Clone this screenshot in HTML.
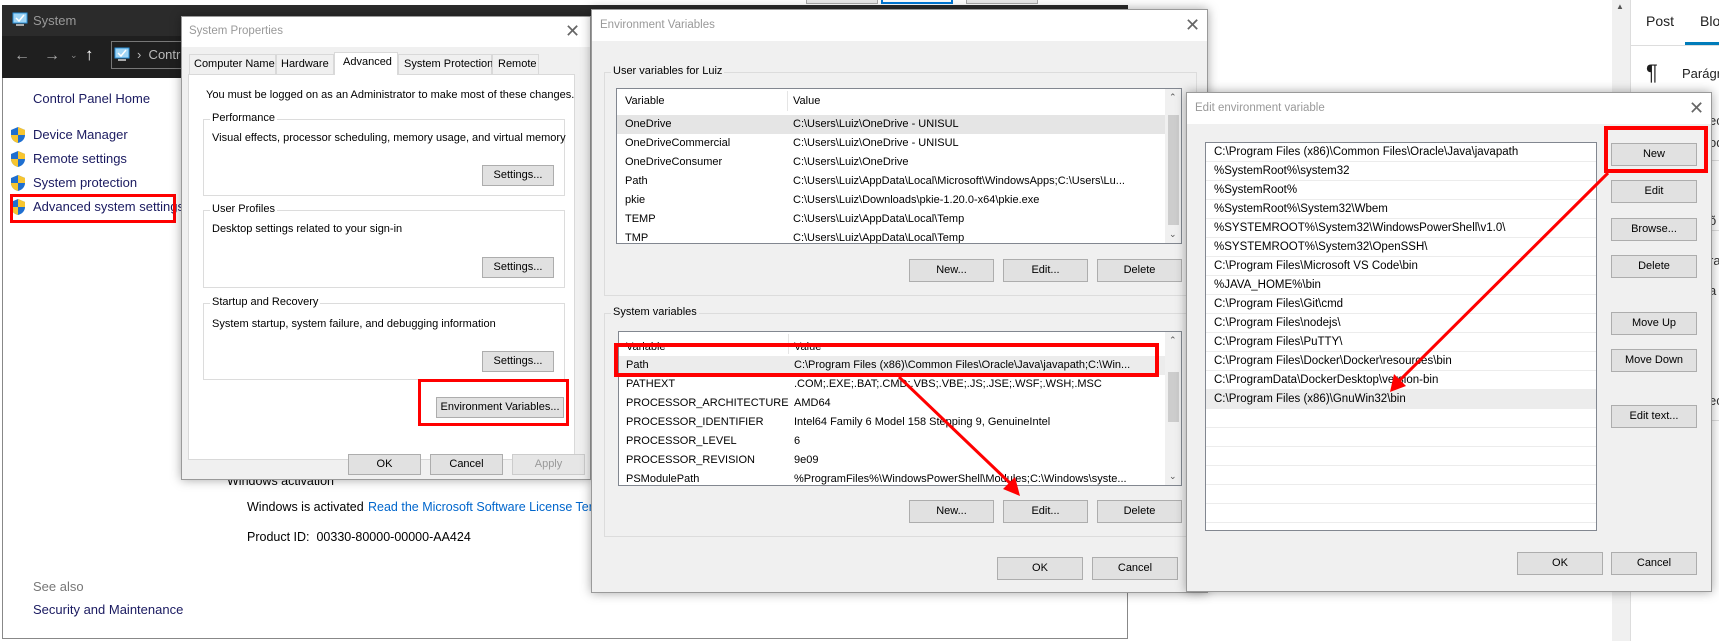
<!DOCTYPE html>
<html><head><meta charset="utf-8">
<style>
*{margin:0;padding:0;box-sizing:border-box}
body{width:1719px;height:641px;overflow:hidden;background:#fff;font-family:"Liberation Sans",sans-serif;font-size:12px;color:#000;position:relative}
.a{position:absolute;white-space:nowrap}
.btn{position:absolute;background:#e1e1e1;border:1px solid #adadad;text-align:center;font-size:11px;white-space:nowrap}
.dlg{position:absolute;background:#f0f0f0;border:1px solid #9a9a9a;box-shadow:0 0 10px rgba(0,0,0,.35);font-size:11px}
.tb{position:absolute;left:0;top:0;right:0;background:#fff}
.ttl{position:absolute;color:#999;font-size:11.5px}
.x{position:absolute;font-size:18px;color:#666;font-weight:300}
.grp{position:absolute;border:1px solid #dcdcdc}
.gl{position:absolute;background:#f0f0f0;padding:0 2px;top:-8px;left:6px;font-size:11px}
.lv{position:absolute;background:#fff;border:1px solid #828790;overflow:hidden}
.row{position:absolute;left:0;height:19px;line-height:19px;white-space:nowrap;width:100%}
.red{position:absolute;border:4px solid #f00}
.lnk{color:#1a1a60;font-size:13px}
</style></head><body>

<!-- top strip -->
<div class="a" style="left:806px;top:0;width:72px;height:4px;border:1px solid #aaa;border-top:0;background:#e8e8e8"></div>
<div class="a" style="left:881px;top:0;width:72px;height:4px;border:2px solid #0078d7;border-top:0"></div>
<div class="a" style="left:966px;top:0;width:72px;height:4px;border:1px solid #aaa;border-top:0;background:#e8e8e8"></div>

<!-- System window -->
<div class="a" style="left:2px;top:5px;width:1126px;height:634px;border:1px solid #888;background:#fff"></div>
<div class="a" style="left:2px;top:5px;width:1126px;height:31px;background:#2b2b2b"></div>
<div class="a" style="left:2px;top:36px;width:1126px;height:42px;background:#1f1f1f"></div>
<svg class="a" style="left:12px;top:12px" width="16" height="15"><rect x="1" y="1" width="14" height="10" fill="#9fd4f5" stroke="#2a8fd8"/><path d="M4 6l3 3 5-6" stroke="#fff" stroke-width="1.5" fill="none"/><rect x="4" y="12" width="8" height="2" fill="#aaa"/></svg>
<div class="a" style="left:33px;top:13px;color:#999;font-size:13px">System</div>
<div class="a" style="left:14px;top:47px;color:#aaa;font-size:16px">&#8592;</div>
<div class="a" style="left:44px;top:47px;color:#aaa;font-size:16px">&#8594;</div>
<div class="a" style="left:70px;top:50px;color:#888;font-size:9px">&#8964;</div>
<div class="a" style="left:85px;top:45px;color:#fff;font-size:17px;font-weight:bold">&#8593;</div>
<div class="a" style="left:111px;top:41px;width:80px;height:28px;border:1px solid #777"></div>
<svg class="a" style="left:114px;top:47px" width="16" height="15"><rect x="1" y="1" width="14" height="10" fill="#9fd4f5" stroke="#2a8fd8"/><path d="M4 6l3 3 5-6" stroke="#fff" stroke-width="1.5" fill="none"/><rect x="4" y="12" width="8" height="2" fill="#aaa"/></svg>
<div class="a" style="left:137px;top:47px;color:#bbb;font-size:13px">› &nbsp;Contr</div>

<div class="a lnk" style="left:33px;top:91px">Control Panel Home</div>
<svg width="0" height="0" style="position:absolute"><defs><symbol id="sh" viewBox="0 0 14 16"><path d="M7 0L0 3v5c0 4 3 7 7 8 4-1 7-4 7-8V3z" fill="#1f6fd0"/><path d="M7 0l7 3v5H7z" fill="#f7c530"/><path d="M0 8h7v8C3 15 0 12 0 8z" fill="#f7c530"/></symbol></defs></svg>
<svg class="a" style="left:11px;top:127px" width="14" height="16"><use href="#sh"/></svg>
<div class="a lnk" style="left:33px;top:127px">Device Manager</div>
<svg class="a" style="left:11px;top:151px" width="14" height="16"><use href="#sh"/></svg>
<div class="a lnk" style="left:33px;top:151px">Remote settings</div>
<svg class="a" style="left:11px;top:175px" width="14" height="16"><use href="#sh"/></svg>
<div class="a lnk" style="left:33px;top:175px">System protection</div>
<svg class="a" style="left:11px;top:199px" width="14" height="16"><use href="#sh"/></svg>
<div class="a lnk" style="left:33px;top:199px">Advanced system settings</div>
<div class="red" style="left:10px;top:194px;width:166px;height:29px;border-width:3px"></div>

<div class="a" style="left:227px;top:474px;font-size:12.5px">Windows activation</div>
<div class="a" style="left:247px;top:500px;font-size:12.5px">Windows is activated</div>
<div class="a" style="left:368px;top:500px;font-size:12.5px;color:#0066cc">Read the Microsoft Software License Terms</div>
<div class="a" style="left:247px;top:530px;font-size:12.5px">Product ID: &nbsp;00330-80000-00000-AA424</div>
<div class="a" style="left:33px;top:579px;font-size:13px;color:#777">See also</div>
<div class="a lnk" style="left:33px;top:602px">Security and Maintenance</div>

<!-- right panel -->
<div class="a" style="left:1612px;top:0;width:18px;height:641px;background:#f0f0f0"></div>
<div class="a" style="left:1616px;top:2px;font-size:8px;color:#555">&#9650;</div>
<div class="a" style="left:1630px;top:0;width:89px;height:641px;border-left:1px solid #ddd;background:#fff"></div>
<div class="a" style="left:1646px;top:13px;font-size:14px;color:#1e1e1e">Post</div>
<div class="a" style="left:1700px;top:13px;font-size:14px;color:#1e1e1e">Blo</div>
<div class="a" style="left:1631px;top:45px;width:88px;height:1px;background:#ddd"></div>
<div class="a" style="left:1685px;top:42px;width:34px;height:3px;background:#007cba"></div>
<div class="a" style="left:1646px;top:60px;font-size:22px;color:#1e1e1e">&para;</div>
<div class="a" style="left:1682px;top:66px;font-size:13px;color:#1e1e1e">Parágr</div>
<div class="a" style="left:1709px;top:113px;font-size:13px;color:#333">ec</div>
<div class="a" style="left:1709px;top:135px;font-size:13px;color:#333">od</div>
<div class="a" style="left:1709px;top:213px;font-size:13px;color:#333">õ</div>
<div class="a" style="left:1709px;top:253px;font-size:13px;color:#333">ra</div>
<div class="a" style="left:1709px;top:283px;font-size:13px;color:#333">a</div>
<div class="a" style="left:1709px;top:393px;font-size:13px;color:#333">ec</div>
<div class="a" style="left:1631px;top:160px;width:88px;height:1px;background:#ddd"></div>
<div class="a" style="left:1631px;top:230px;width:88px;height:1px;background:#ddd"></div>
<div class="a" style="left:1631px;top:420px;width:88px;height:1px;background:#ddd"></div>

<!-- System Properties -->
<div class="dlg" style="left:181px;top:16px;width:410px;height:464px">
  <div class="tb" style="height:30px"></div>
  <div class="ttl" style="left:7px;top:8px">System Properties</div>
  <div class="x" style="left:383px;top:4px">&#10005;</div>
  <div class="a" style="left:6px;top:57px;width:387px;height:386px;background:#fff;border:1px solid #d9d9d9"></div>
  <div class="a" style="left:7px;top:37px;width:87px;height:21px;border:1px solid #d9d9d9;background:#f0f0f0;line-height:19px;padding-left:4px">Computer Name</div>
  <div class="a" style="left:94px;top:37px;width:58px;height:21px;border:1px solid #d9d9d9;background:#f0f0f0;line-height:19px;padding-left:4px">Hardware</div>
  <div class="a" style="left:152px;top:35px;width:64px;height:23px;border:1px solid #d9d9d9;border-bottom:0;background:#fff;line-height:19px;padding-left:8px">Advanced</div>
  <div class="a" style="left:216px;top:37px;width:94px;height:21px;border:1px solid #d9d9d9;background:#f0f0f0;line-height:19px;padding-left:5px">System Protection</div>
  <div class="a" style="left:310px;top:37px;width:47px;height:21px;border:1px solid #d9d9d9;background:#f0f0f0;line-height:19px;padding-left:5px">Remote</div>
  <div class="a" style="left:24px;top:72px">You must be logged on as an Administrator to make most of these changes.</div>
  <div class="grp" style="left:21px;top:102px;width:362px;height:77px"><div class="gl" style="background:#fff">Performance</div></div>
  <div class="a" style="left:30px;top:115px">Visual effects, processor scheduling, memory usage, and virtual memory</div>
  <div class="btn" style="left:300px;top:148px;width:72px;height:21px;line-height:19px">Settings...</div>
  <div class="grp" style="left:21px;top:193px;width:362px;height:78px"><div class="gl" style="background:#fff">User Profiles</div></div>
  <div class="a" style="left:30px;top:206px">Desktop settings related to your sign-in</div>
  <div class="btn" style="left:300px;top:240px;width:72px;height:21px;line-height:19px">Settings...</div>
  <div class="grp" style="left:21px;top:286px;width:362px;height:77px"><div class="gl" style="background:#fff">Startup and Recovery</div></div>
  <div class="a" style="left:30px;top:301px">System startup, system failure, and debugging information</div>
  <div class="btn" style="left:300px;top:334px;width:72px;height:21px;line-height:19px">Settings...</div>
  <div class="btn" style="left:254px;top:380px;width:128px;height:21px;line-height:19px">Environment Variables...</div>
  <div class="btn" style="left:166px;top:437px;width:73px;height:21px;line-height:19px">OK</div>
  <div class="btn" style="left:248px;top:437px;width:73px;height:21px;line-height:19px">Cancel</div>
  <div class="btn" style="left:330px;top:437px;width:73px;height:21px;line-height:19px;color:#999;border-color:#ccc;background:#e6e6e6">Apply</div>
</div>
<div class="red" style="left:418px;top:379px;width:151px;height:47px;border-width:3px"></div>

<!-- Environment Variables -->
<div class="dlg" style="left:591px;top:9px;width:617px;height:584px">
  <div class="tb" style="height:31px"></div>
  <div class="ttl" style="left:8px;top:9px">Environment Variables</div>
  <div class="x" style="left:593px;top:5px">&#10005;</div>
  <div class="grp" style="left:12px;top:62px;width:593px;height:224px"><div class="gl">User variables for Luiz</div></div>
  <div class="lv" style="left:24px;top:78px;width:566px;height:156px">
    <div class="row" style="top:0;height:22px;line-height:24px;padding-left:8px">Variable</div>
    <div class="a" style="left:170px;top:2px;width:1px;height:20px;background:#e5e5e5"></div>
    <div class="a" style="left:176px;top:0;line-height:24px">Value</div>
    <div class="row" style="top:26px;background:#e5e5e5;width:548px"></div>
    <div class="row" style="top:26px;padding-left:8px">OneDrive</div><div class="a" style="left:176px;top:26px;line-height:19px">C:\Users\Luiz\OneDrive - UNISUL</div>
    <div class="row" style="top:45px;padding-left:8px">OneDriveCommercial</div><div class="a" style="left:176px;top:45px;line-height:19px">C:\Users\Luiz\OneDrive - UNISUL</div>
    <div class="row" style="top:64px;padding-left:8px">OneDriveConsumer</div><div class="a" style="left:176px;top:64px;line-height:19px">C:\Users\Luiz\OneDrive</div>
    <div class="row" style="top:83px;padding-left:8px">Path</div><div class="a" style="left:176px;top:83px;line-height:19px">C:\Users\Luiz\AppData\Local\Microsoft\WindowsApps;C:\Users\Lu...</div>
    <div class="row" style="top:102px;padding-left:8px">pkie</div><div class="a" style="left:176px;top:102px;line-height:19px">C:\Users\Luiz\Downloads\pkie-1.20.0-x64\pkie.exe</div>
    <div class="row" style="top:121px;padding-left:8px">TEMP</div><div class="a" style="left:176px;top:121px;line-height:19px">C:\Users\Luiz\AppData\Local\Temp</div>
    <div class="row" style="top:140px;padding-left:8px">TMP</div><div class="a" style="left:176px;top:140px;line-height:19px">C:\Users\Luiz\AppData\Local\Temp</div>
    <div class="a" style="left:548px;top:0;width:17px;height:156px;background:#f0f0f0"></div>
    <div class="a" style="left:551px;top:26px;width:11px;height:110px;background:#cdcdcd"></div>
    <div class="a" style="left:552px;top:3px;font-size:9px;color:#555">&#8963;</div>
    <div class="a" style="left:552px;top:140px;font-size:9px;color:#555">&#8964;</div>
  </div>
  <div class="btn" style="left:317px;top:249px;width:85px;height:23px;line-height:21px">New...</div>
  <div class="btn" style="left:411px;top:249px;width:85px;height:23px;line-height:21px">Edit...</div>
  <div class="btn" style="left:505px;top:249px;width:85px;height:23px;line-height:21px">Delete</div>

  <div class="grp" style="left:12px;top:303px;width:593px;height:224px"><div class="gl">System variables</div></div>
  <div class="lv" style="left:26px;top:321px;width:564px;height:155px">
    <div class="a" style="left:7px;top:3px;line-height:24px">Variable</div>
    <div class="a" style="left:169px;top:2px;width:1px;height:20px;background:#e5e5e5"></div>
    <div class="a" style="left:175px;top:3px;line-height:24px">Value</div>
    <div class="row" style="top:24px;background:#ececec;width:546px"></div>
    <div class="a" style="left:7px;top:24px;line-height:19px">Path</div><div class="a" style="left:175px;top:24px;line-height:19px">C:\Program Files (x86)\Common Files\Oracle\Java\javapath;C:\Win...</div>
    <div class="a" style="left:7px;top:43px;line-height:19px">PATHEXT</div><div class="a" style="left:175px;top:43px;line-height:19px">.COM;.EXE;.BAT;.CMD;.VBS;.VBE;.JS;.JSE;.WSF;.WSH;.MSC</div>
    <div class="a" style="left:7px;top:62px;line-height:19px">PROCESSOR_ARCHITECTURE</div><div class="a" style="left:175px;top:62px;line-height:19px">AMD64</div>
    <div class="a" style="left:7px;top:81px;line-height:19px">PROCESSOR_IDENTIFIER</div><div class="a" style="left:175px;top:81px;line-height:19px">Intel64 Family 6 Model 158 Stepping 9, GenuineIntel</div>
    <div class="a" style="left:7px;top:100px;line-height:19px">PROCESSOR_LEVEL</div><div class="a" style="left:175px;top:100px;line-height:19px">6</div>
    <div class="a" style="left:7px;top:119px;line-height:19px">PROCESSOR_REVISION</div><div class="a" style="left:175px;top:119px;line-height:19px">9e09</div>
    <div class="a" style="left:7px;top:138px;line-height:19px">PSModulePath</div><div class="a" style="left:175px;top:138px;line-height:19px">%ProgramFiles%\WindowsPowerShell\Modules;C:\Windows\syste...</div>
    <div class="a" style="left:546px;top:0;width:17px;height:155px;background:#f0f0f0"></div>
    <div class="a" style="left:549px;top:40px;width:11px;height:50px;background:#cdcdcd"></div>
    <div class="a" style="left:550px;top:3px;font-size:9px;color:#555">&#8963;</div>
    <div class="a" style="left:550px;top:139px;font-size:9px;color:#555">&#8964;</div>
  </div>
  <div class="btn" style="left:317px;top:490px;width:85px;height:23px;line-height:21px">New...</div>
  <div class="btn" style="left:411px;top:490px;width:85px;height:23px;line-height:21px">Edit...</div>
  <div class="btn" style="left:505px;top:490px;width:85px;height:23px;line-height:21px">Delete</div>
  <div class="btn" style="left:405px;top:547px;width:86px;height:23px;line-height:21px">OK</div>
  <div class="btn" style="left:500px;top:547px;width:86px;height:23px;line-height:21px">Cancel</div>
</div>
<div class="red" style="left:614px;top:343px;width:545px;height:34px"></div>

<!-- Edit environment variable -->
<div class="dlg" style="left:1186px;top:92px;width:526px;height:500px">
  <div class="tb" style="height:31px"></div>
  <div class="ttl" style="left:8px;top:9px">Edit environment variable</div>
  <div class="x" style="left:502px;top:5px">&#10005;</div>
  <div class="lv" style="left:18px;top:49px;width:392px;height:389px;font-size:11.5px">
    <div class="a" style="left:0;top:0;width:100%;height:100%;background:repeating-linear-gradient(to bottom,transparent 0,transparent 18px,#ececec 18px,#ececec 19px)"></div>
    <div class="row" style="top:247px;background:#ececec"></div>
    <div class="a" style="left:8px;top:0;line-height:19px">C:\Program Files (x86)\Common Files\Oracle\Java\javapath</div>
    <div class="a" style="left:8px;top:19px;line-height:19px">%SystemRoot%\system32</div>
    <div class="a" style="left:8px;top:38px;line-height:19px">%SystemRoot%</div>
    <div class="a" style="left:8px;top:57px;line-height:19px">%SystemRoot%\System32\Wbem</div>
    <div class="a" style="left:8px;top:76px;line-height:19px">%SYSTEMROOT%\System32\WindowsPowerShell\v1.0\</div>
    <div class="a" style="left:8px;top:95px;line-height:19px">%SYSTEMROOT%\System32\OpenSSH\</div>
    <div class="a" style="left:8px;top:114px;line-height:19px">C:\Program Files\Microsoft VS Code\bin</div>
    <div class="a" style="left:8px;top:133px;line-height:19px">%JAVA_HOME%\bin</div>
    <div class="a" style="left:8px;top:152px;line-height:19px">C:\Program Files\Git\cmd</div>
    <div class="a" style="left:8px;top:171px;line-height:19px">C:\Program Files\nodejs\</div>
    <div class="a" style="left:8px;top:190px;line-height:19px">C:\Program Files\PuTTY\</div>
    <div class="a" style="left:8px;top:209px;line-height:19px">C:\Program Files\Docker\Docker\resources\bin</div>
    <div class="a" style="left:8px;top:228px;line-height:19px">C:\ProgramData\DockerDesktop\version-bin</div>
    <div class="a" style="left:8px;top:247px;line-height:19px">C:\Program Files (x86)\GnuWin32\bin</div>
  </div>
  <div class="btn" style="left:424px;top:50px;width:86px;height:23px;line-height:21px">New</div>
  <div class="btn" style="left:424px;top:87px;width:86px;height:23px;line-height:21px">Edit</div>
  <div class="btn" style="left:424px;top:125px;width:86px;height:23px;line-height:21px">Browse...</div>
  <div class="btn" style="left:424px;top:162px;width:86px;height:23px;line-height:21px">Delete</div>
  <div class="btn" style="left:424px;top:219px;width:86px;height:23px;line-height:21px">Move Up</div>
  <div class="btn" style="left:424px;top:256px;width:86px;height:23px;line-height:21px">Move Down</div>
  <div class="btn" style="left:424px;top:312px;width:86px;height:23px;line-height:21px">Edit text...</div>
  <div class="btn" style="left:330px;top:459px;width:86px;height:23px;line-height:21px">OK</div>
  <div class="btn" style="left:424px;top:459px;width:86px;height:23px;line-height:21px">Cancel</div>
</div>
<div class="red" style="left:1604px;top:126px;width:104px;height:47px"></div>

<!-- arrows -->
<svg class="a" style="left:0;top:0" width="1719" height="641">
  <line x1="1608" y1="173" x2="1398" y2="382" stroke="#f00" stroke-width="3"/>
  <polygon points="1390,392 1394,374 1406,386" fill="#f00"/>
  <line x1="899" y1="377" x2="1012" y2="485" stroke="#f00" stroke-width="3"/>
  <polygon points="1020,496 1003,489 1015,477" fill="#f00"/>
</svg>
</body></html>
